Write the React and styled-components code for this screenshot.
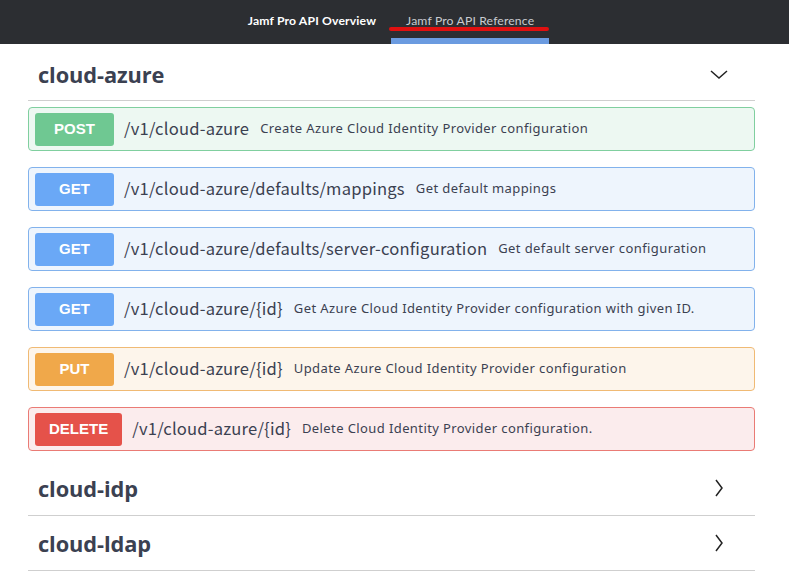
import styled, { createGlobalStyle } from "styled-components";

const GlobalStyle = createGlobalStyle`
  body {
    margin: 0;
    background: #fff;
    font-family: "Noto Sans CJK JP", "Noto Sans", sans-serif;
    color: #3b4151;
  }
`;

const methods = {
  post: { badge: "#6fc892", bg: "#edf8f2", border: "#80cf9f" },
  get: { badge: "#6aa8f6", bg: "#eef5fd", border: "#82b2ec" },
  put: { badge: "#f0a84a", bg: "#fdf5eb", border: "#f0ba74" },
  delete: { badge: "#e5524a", bg: "#fbeced", border: "#ea7b75" },
};

const ops = [
  { method: "post", path: "/v1/cloud-azure", desc: "Create Azure Cloud Identity Provider configuration" },
  { method: "get", path: "/v1/cloud-azure/defaults/mappings", desc: "Get default mappings" },
  { method: "get", path: "/v1/cloud-azure/defaults/server-configuration", desc: "Get default server configuration" },
  { method: "get", path: "/v1/cloud-azure/{id}", desc: "Get Azure Cloud Identity Provider configuration with given ID." },
  { method: "put", path: "/v1/cloud-azure/{id}", desc: "Update Azure Cloud Identity Provider configuration" },
  { method: "delete", path: "/v1/cloud-azure/{id}", desc: "Delete Cloud Identity Provider configuration." },
];

const TopBar = styled.header`
  height: 44px;
  background: #2c2e32;
  display: flex;
  justify-content: center;
  gap: 13px;
  padding-left: 8px;
  box-sizing: border-box;
`;

const NavItem = styled.div`
  position: relative;
  display: flex;
  align-items: flex-start;
  padding: 13px 0 0;
  font-family: "Lato", "Noto Sans", sans-serif;
  font-size: 12.2px;
  letter-spacing: 0.15px;
  font-weight: ${(p) => (p.active ? 400 : 700)};
  color: ${(p) => (p.active ? "#c9cbd0" : "#ffffff")};
  ${(p) =>
    p.active &&
    `
    padding: 13px 15px 0 17px;
    &::before {
      content: "";
      position: absolute;
      left: 0;
      right: 0;
      top: 27px;
      height: 4px;
      border-radius: 3px;
      background: #e01010;
    }
    &::after {
      content: "";
      position: absolute;
      left: 2px;
      right: 0;
      bottom: 0;
      height: 6px;
      background: #6b9be0;
    }
  `}
`;

const Main = styled.main`
  padding: 0 34px 0 28px;
`;

const SectionHeader = styled.div`
  display: flex;
  align-items: center;
  justify-content: space-between;
  height: ${(p) => p.h}px;
  padding: ${(p) => (p.first ? "5px" : "0")} 26px 0 10px;
  border-bottom: 1px solid #cfcfcf;
  box-sizing: border-box;
`;

const Title = styled.h3`
  margin: 0;
  font-family: "Open Sans", "Noto Sans", sans-serif;
  font-size: 21.8px;
  font-weight: 700;
  color: #3b4151;
  letter-spacing: -0.1px;
`;

const OpList = styled.div`
  display: flex;
  flex-direction: column;
  gap: 16px;
  padding: 6px 0 10px;
`;

const Op = styled.div`
  display: flex;
  align-items: center;
  height: 44px;
  box-sizing: border-box;
  padding: 0 6px;
  border: 1px solid ${(p) => methods[p.m].border};
  background: ${(p) => methods[p.m].bg};
  border-radius: 4px;
`;

const Badge = styled.span`
  min-width: 79px;
  padding: 0 14px 2px;
  box-sizing: border-box;
  height: 33px;
  border-radius: 3px;
  background: ${(p) => methods[p.m].badge};
  color: #fff;
  font-family: "Liberation Sans", Arial, sans-serif;
  font-weight: 700;
  font-size: 15px;
  display: flex;
  align-items: center;
  justify-content: center;
`;

const Path = styled.span`
  margin-left: 10px;
  margin-top: -3px;
  font-size: 16.6px;
  color: #3b4151;
  letter-spacing: 0.2px;
`;

const Desc = styled.span`
  margin-left: 11px;
  margin-top: -2px;
  font-family: "Noto Sans", sans-serif;
  font-size: 13px;
  letter-spacing: 0.4px;
  color: #3b4151;
`;

const Chevron = ({ dir }) => (
  <svg width="20" height="20" viewBox="0 0 20 20" fill="none" stroke="#222" strokeWidth="1.5">
    {dir === "down" ? <path d="M2 6l8 7 8-7" /> : <path d="M7 2l6 8-6 8" />}
  </svg>
);

export default function App() {
  return (
    <>
      <GlobalStyle />
      <TopBar>
        <NavItem>Jamf Pro API Overview</NavItem>
        <NavItem active>Jamf Pro API Reference</NavItem>
      </TopBar>
      <Main>
        <SectionHeader h={57} first>
          <Title>cloud-azure</Title>
          <Chevron dir="down" />
        </SectionHeader>
        <OpList>
          {ops.map((o, i) => (
            <Op key={i} m={o.method}>
              <Badge m={o.method}>{o.method.toUpperCase()}</Badge>
              <Path>{o.path}</Path>
              <Desc>{o.desc}</Desc>
            </Op>
          ))}
        </OpList>
        <SectionHeader h={55}>
          <Title>cloud-idp</Title>
          <Chevron dir="right" />
        </SectionHeader>
        <SectionHeader h={55}>
          <Title>cloud-ldap</Title>
          <Chevron dir="right" />
        </SectionHeader>
      </Main>
    </>
  );
}
